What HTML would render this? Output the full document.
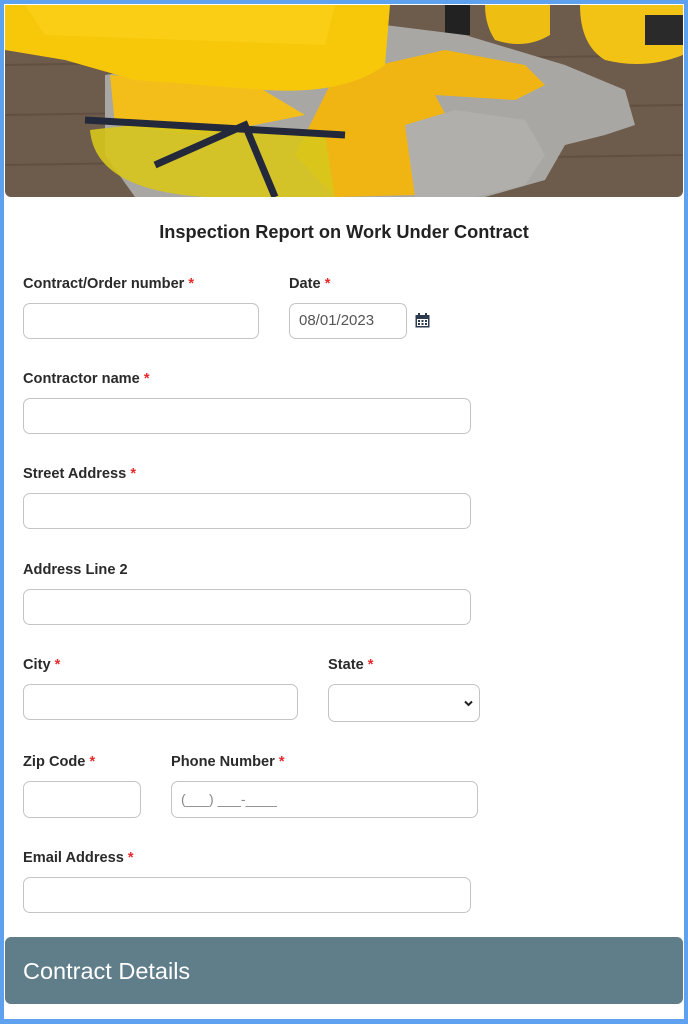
<!DOCTYPE html>
<html><head><meta charset="utf-8"><style>
*{box-sizing:border-box;margin:0;padding:0}
html,body{width:688px;height:1024px;overflow:hidden;background:#5ea1ef;font-family:"Liberation Sans",sans-serif}
.panel{position:absolute;left:4px;top:4px;width:680px;height:1015px;background:#fff}
.img{position:absolute;left:5px;top:5px;width:678px;height:192px;border-radius:0 0 6px 6px;overflow:hidden}
.t{position:absolute;left:0;width:688px;top:222px;text-align:center;font-weight:bold;font-size:18.2px;color:#222}
.l{position:absolute;font-weight:bold;font-size:14.6px;color:#2a2a2a}
.l b{color:#e52b2b;font-weight:bold}
.i{position:absolute;border:1px solid #c4c4c4;border-radius:7px;background:#fff;font-size:15px;color:#555;padding-left:9px;line-height:34px}
.bar{position:absolute;left:5px;top:937px;width:678px;height:67px;background:#607d8a;border-radius:6px;color:#fff;font-size:23.5px;line-height:68px;padding-left:18px}
</style></head><body>
<div class="panel"></div>
<div class="img"><svg width="678" height="192" viewBox="0 0 678 192">
<rect width="678" height="192" fill="#6d5b4b"/>
<g stroke="#5a4a3c" stroke-width="2" opacity=".6"><line x1="0" y1="60" x2="678" y2="50"/><line x1="0" y1="110" x2="678" y2="100"/><line x1="0" y1="160" x2="678" y2="150"/></g>
<path d="M575 0H678V50Q640 65 600 55Q575 40 575 0Z" fill="#f2c314"/>
<path d="M480 0H545V30Q520 45 490 35Q480 20 480 0Z" fill="#eebf12"/>
<path d="M440 0h25v30h-25z" fill="#222"/>
<path d="M640 10h38v30h-38z" fill="#2a2a2a"/>
<path d="M100 70L300 40L380 20L460 30L560 60L620 85L630 120L600 130L560 140L540 175L480 192H130L100 150Z" fill="#a8a7a4"/>
<path d="M330 70L440 45L520 60L540 80L510 95L430 90L460 145L410 190L330 192L290 150Z" fill="#f0b413"/>
<path d="M105 70L250 80L300 110L200 130L110 120Z" fill="#f3bd1a"/>
<path d="M400 120L450 105L520 115L540 150L520 180L470 192H410Z" fill="#b0afac"/>
<path d="M85 125Q90 185 200 192H330L320 130Q200 110 85 125Z" fill="#d7c71c" opacity=".9"/>
<path d="M80 115L340 130M150 160L240 120L270 192" stroke="#23283a" stroke-width="7" fill="none"/>
<path d="M0 0H385L380 60Q340 90 260 85L130 75L60 55L0 45Z" fill="#f7c80a"/>
<path d="M20 0H330L320 40L40 30Z" fill="#fbd21c" opacity=".6"/>
</svg></div>
<div class="t">Inspection Report on Work Under Contract</div>

<div class="l" style="left:23px;top:276px">Contract/Order number <b>*</b></div>
<div class="i" style="left:23px;top:303px;width:236px;height:36px"></div>
<div class="l" style="left:289px;top:276px">Date <b>*</b></div>
<div class="i" style="left:289px;top:303px;width:118px;height:36px">08/01/2023</div>
<svg style="position:absolute;left:415px;top:313px" width="15" height="15" viewBox="0 0 15 15"><rect x="0.5" y="2" width="14" height="12.5" fill="#2b3a4d"/><rect x="2" y="6" width="11" height="7" fill="#fff"/><g fill="#2b3a4d"><rect x="3" y="7" width="2" height="2"/><rect x="6.5" y="7" width="2" height="2"/><rect x="10" y="7" width="2" height="2"/><rect x="3" y="10" width="2" height="2"/><rect x="6.5" y="10" width="2" height="2"/><rect x="10" y="10" width="2" height="2"/><rect x="3" y="0" width="2" height="3"/><rect x="10" y="0" width="2" height="3"/></g></svg>

<div class="l" style="left:23px;top:371px">Contractor name <b>*</b></div>
<div class="i" style="left:23px;top:398px;width:448px;height:36px"></div>
<div class="l" style="left:23px;top:466px">Street Address <b>*</b></div>
<div class="i" style="left:23px;top:493px;width:448px;height:36px"></div>
<div class="l" style="left:23px;top:562px">Address Line 2</div>
<div class="i" style="left:23px;top:589px;width:448px;height:36px"></div>

<div class="l" style="left:23px;top:657px">City <b>*</b></div>
<div class="i" style="left:23px;top:684px;width:275px;height:36px"></div>
<div class="l" style="left:328px;top:657px">State <b>*</b></div>
<div class="i" style="left:328px;top:684px;width:152px;height:38px"><svg style="position:absolute;right:6px;top:15px" width="9" height="7" viewBox="0 0 9 7"><path d="M1 1.5L4.5 5L8 1.5" stroke="#222" stroke-width="2" fill="none"/></svg></div>

<div class="l" style="left:23px;top:754px">Zip Code <b>*</b></div>
<div class="i" style="left:23px;top:781px;width:118px;height:37px"></div>
<div class="l" style="left:171px;top:754px">Phone Number <b>*</b></div>
<div class="i" style="left:171px;top:781px;width:307px;height:37px;color:#888;font-size:14px">(___) ___-____</div>

<div class="l" style="left:23px;top:850px">Email Address <b>*</b></div>
<div class="i" style="left:23px;top:877px;width:448px;height:36px"></div>

<div class="bar">Contract Details</div>
</body></html>
